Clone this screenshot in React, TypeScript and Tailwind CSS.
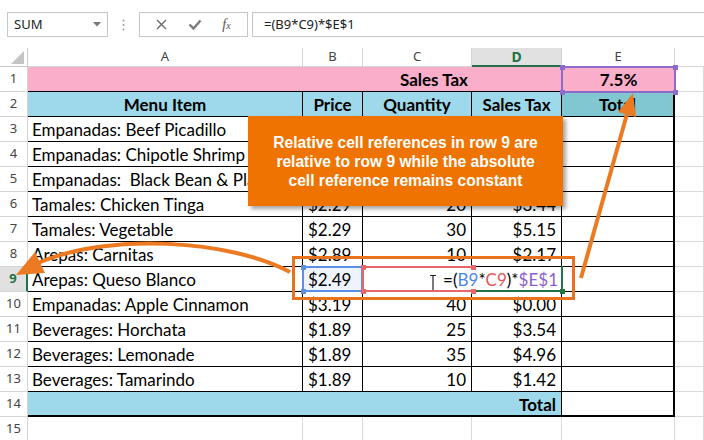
import React from "react";

const font = "font-['Lato',sans-serif]";
const cell = "shrink-0 h-full flex items-center whitespace-pre overflow-hidden border-r border-b border-black text-[17px] text-black pt-[2px]";
const grid = "flex-1 h-full border-r border-b border-[#dadada]";

type RowData = [number, string, string, string, string];

// rows 3-5 values sit under the callout, so they are left out
const rows: RowData[] = [
  [3, "Empanadas: Beef Picadillo", "", "", ""],
  [4, "Empanadas: Chipotle Shrimp", "", "", ""],
  [5, "Empanadas:  Black Bean & Plantain", "", "", ""],
  [6, "Tamales: Chicken Tinga", "$2.29", "20", "$3.44"],
  [7, "Tamales: Vegetable", "$2.29", "30", "$5.15"],
  [8, "Arepas: Carnitas", "$2.89", "10", "$2.17"],
  [9, "Arepas: Queso Blanco", "$2.49", "", ""],
  [10, "Empanadas: Apple Cinnamon", "$3.19", "40", "$0.00"],
  [11, "Beverages: Horchata", "$1.89", "25", "$3.54"],
  [12, "Beverages: Lemonade", "$1.89", "35", "$4.96"],
  [13, "Beverages: Tamarindo", "$1.89", "10", "$1.42"],
];

function RowHead({ n, active }: { n: number; active?: boolean }) {
  if (active) {
    return (
      <div className="w-[28px] shrink-0 h-full flex items-center justify-center border-b border-[#d4d4d4] border-r-2 border-r-[#217346] bg-[#e1e1e1] text-[#217346] font-bold text-[13px] font-['Noto_Sans',sans-serif]">
        {n}
      </div>
    );
  }
  return (
    <div className="w-[28px] shrink-0 h-full flex items-center justify-center border-r border-b border-[#d4d4d4] text-[#444] text-[13px] font-['Noto_Sans',sans-serif]">
      {n}
    </div>
  );
}

function Handle({ x, y, color }: { x: number; y: number; color: string }) {
  return (
    <div
      className="absolute w-[5px] h-[5px]"
      style={{ left: x - 2, top: y - 2, backgroundColor: color }}
    />
  );
}

const Toolbar = () => (
  <div className="h-[48px] flex pt-[12px] font-['Noto_Sans',sans-serif]">
    <div className="ml-[7px] w-[101px] h-[25px] border border-[#c6c6c6] flex items-center justify-between pl-[6px] pr-[6px] text-[13px] text-[#222]">
      <span>SUM</span>
      <svg width="8" height="5" viewBox="0 0 8 5">
        <path d="M0 0 L8 0 L4 4.5 Z" fill="#777" />
      </svg>
    </div>
    <div className="w-[31px] h-[25px] flex items-center justify-center">
      <svg width="3" height="12" viewBox="0 0 3 12">
        <circle cx="1.5" cy="1.5" r="1" fill="#999" />
        <circle cx="1.5" cy="6" r="1" fill="#999" />
        <circle cx="1.5" cy="10.5" r="1" fill="#999" />
      </svg>
    </div>
    <div className="w-[109px] h-[25px] border border-[#c6c6c6] flex items-center justify-around px-[6px]">
      <svg width="11" height="11" viewBox="0 0 11 11">
        <path d="M1 1 L10 10 M10 1 L1 10" stroke="#6a6a6a" strokeWidth="1.4" />
      </svg>
      <svg width="14" height="11" viewBox="0 0 14 11">
        <path d="M1.5 5.5 L5.5 9.5 L12.5 1.5" stroke="#7a7a7a" strokeWidth="2.4" fill="none" />
      </svg>
      <span className="italic font-['Liberation_Serif',serif] text-[14px] text-[#555] leading-none">
        f<span className="text-[10px]">x</span>
      </span>
    </div>
    <div className="ml-[4px] flex-1 h-[25px] border-y border-l border-[#c6c6c6] flex items-center pl-[11px] text-[13px] text-[#222]">
      =(B9*C9)*$E$1
    </div>
  </div>
);

const ColumnHeads = () => (
  <div className="flex h-[19px] text-[13px] text-[#444] font-['Noto_Sans',sans-serif]">
    <div className="w-[28px] shrink-0 h-full relative border-r border-b border-[#c8c8c8]">
      <svg className="absolute left-[11px] top-[3px]" width="13" height="13" viewBox="0 0 13 13">
        <path d="M13 0 L13 13 L0 13 Z" fill="#c4c4c4" />
      </svg>
    </div>
    <div className="w-[275px] shrink-0 h-full flex items-center justify-center border-r border-b border-[#d4d4d4]">A</div>
    <div className="w-[60px] shrink-0 h-full flex items-center justify-center border-r border-b border-[#d4d4d4]">B</div>
    <div className="w-[109px] shrink-0 h-full flex items-center justify-center border-r border-b border-[#d4d4d4]">C</div>
    <div className="w-[90px] shrink-0 h-full flex items-center justify-center border-r border-[#d4d4d4] border-b-2 border-b-[#217346] bg-[#e1e1e1] text-[#217346] font-bold text-[14px]">D</div>
    <div className="w-[113px] shrink-0 h-full flex items-center justify-center border-r border-b border-[#d4d4d4]">E</div>
    <div className="flex-1 h-full border-b border-[#d4d4d4]" />
  </div>
);

export default function App() {
  return (
    <div className={`relative w-[704px] h-[440px] overflow-hidden bg-white ${font}`}>
      <Toolbar />
      <ColumnHeads />

      {/* row 1 */}
      <div className="flex h-[25px]">
        <RowHead n={1} />
        <div className={`${cell} w-[444px] border-r-0 justify-end pr-[4px] bg-[#fbaec9] font-bold`}>Sales Tax</div>
        <div className={`${cell} w-[90px] border-r-0 bg-[#fbaec9]`} />
        <div className={`${cell} w-[113px] border-r-0 justify-center bg-[#fbaec9] font-bold`}>7.5%</div>
        <div className={grid} />
      </div>

      {/* row 2 */}
      <div className="flex h-[25px]">
        <RowHead n={2} />
        <div className={`${cell} w-[275px] justify-center bg-[#9dd9ea] font-bold`}>Menu Item</div>
        <div className={`${cell} w-[60px] justify-center bg-[#9dd9ea] font-bold`}>Price</div>
        <div className={`${cell} w-[109px] justify-center bg-[#9dd9ea] font-bold`}>Quantity</div>
        <div className={`${cell} w-[90px] justify-center bg-[#9dd9ea] font-bold`}>Sales Tax</div>
        <div className={`${cell} w-[113px] border-r-2 justify-center bg-[#80c7d1] font-bold`}>Total</div>
        <div className={grid} />
      </div>

      {rows.map(([n, item, price, qty, tax]) => (
        <div key={n} className="flex h-[25px]">
          <RowHead n={n} active={n === 9} />
          <div className={`${cell} w-[275px] pl-[4px]`}>{item}</div>
          <div className={`${cell} w-[60px] pl-[5px] ${n === 9 ? "bg-[#eef3fc]" : ""}`}>{price}</div>
          <div className={`${cell} w-[109px] justify-end pr-[5px]`}>{qty}</div>
          <div className={`${cell} w-[90px] justify-end pr-[5px]`}>{tax}</div>
          <div className={`${cell} w-[113px] border-r-2`} />
          <div className={grid} />
        </div>
      ))}

      {/* row 14 */}
      <div className="flex h-[25px]">
        <RowHead n={14} />
        <div className={`${cell} w-[534px] border-b-2 justify-end pr-[5px] bg-[#9dd9ea] font-bold`}>Total</div>
        <div className={`${cell} w-[113px] border-r-2 border-b-2`} />
        <div className={grid} />
      </div>

      {/* row 15 */}
      <div className="flex h-[25px]">
        <RowHead n={15} />
        <div className="w-[275px] shrink-0 h-full border-r border-b border-[#dadada]" />
        <div className="w-[60px] shrink-0 h-full border-r border-b border-[#dadada]" />
        <div className="w-[109px] shrink-0 h-full border-r border-b border-[#dadada]" />
        <div className="w-[90px] shrink-0 h-full border-r border-b border-[#dadada]" />
        <div className="w-[113px] shrink-0 h-full border-r border-b border-[#dadada]" />
        <div className={grid} />
      </div>

      {/* formula being edited in D9, its box hides the cell border beneath */}
      <div className="absolute left-[436px] top-[268px] w-[124px] h-[23px] bg-white flex items-center justify-end pt-[1px] pr-[2px] text-[17px] text-black whitespace-pre">
        =(<span className="text-[#4a86e8]">B9</span>*<span className="text-[#e8545a]">C9</span>)*<span className="text-[#8c5fd0]">$E$1</span>
      </div>
      <svg className="absolute left-[429px] top-[275px]" width="8" height="16" viewBox="0 0 8 16">
        <path d="M1 0.5 H7 M4 0.5 V15.5 M1 15.5 H7" stroke="#222" strokeWidth="1.2" fill="none" />
      </svg>

      {/* range reference borders */}
      <div className="absolute left-[302px] top-[266px] w-[61px] h-[26px] border-2 border-[#5b8fe8]" />
      <div className="absolute left-[362px] top-[266px] w-[112px] h-[26px] border-2 border-r-0 border-[#e8676b]" />
      <div className="absolute left-[474px] top-[266px] w-[89px] h-[26px] border-b-2 border-r-2 border-[#217346]" />
      <div className="absolute left-[561px] top-[66px] w-[115px] h-[27px] border-2 border-[#8e6bc8]" />

      <Handle x={303} y={267} color="#5b8fe8" />
      <Handle x={303} y={291} color="#5b8fe8" />
      <Handle x={363} y={267} color="#e8676b" />
      <Handle x={363} y={291} color="#e8676b" />
      <Handle x={473} y={267} color="#e8676b" />
      <Handle x={473} y={291} color="#e8676b" />
      <Handle x={562} y={291} color="#217346" />
      <Handle x={562} y={67} color="#8e6bc8" />
      <Handle x={675} y={67} color="#8e6bc8" />
      <Handle x={562} y={92} color="#8e6bc8" />
      <Handle x={675} y={92} color="#8e6bc8" />

      {/* highlight around row 9 */}
      <div className="absolute left-[292px] top-[256px] w-[283px] h-[44px] border-[3px] border-[#e8731c]" />

      {/* callout */}
      <div className="absolute left-[248px] top-[116px] w-[315px] h-[90px] bg-[#ef7300] shadow-[3px_3px_4px_rgba(0,0,0,0.35)] flex items-center justify-center text-center text-white font-bold text-[15.6px] leading-[19px] font-['Liberation_Sans',Arial,sans-serif]">
        <div>
          Relative cell references in row 9 are
          <br />
          relative to row 9 while the absolute
          <br />
          cell reference remains constant
        </div>
      </div>

      {/* arrows */}
      <svg className="absolute left-0 top-0 pointer-events-none" width="704" height="440" viewBox="0 0 704 440">
        <path d="M290 272 C230 240 110 232 38 263" stroke="#ec7a22" strokeWidth="4" fill="none" />
        <path d="M16 275 L45 273 L35 252 Z" fill="#ec7a22" />
        <path d="M581 278 L627 114" stroke="#ec7a22" strokeWidth="4" fill="none" />
        <path d="M633 93 L636 117 L618 112 Z" fill="#ec7a22" />
      </svg>
    </div>
  );
}
